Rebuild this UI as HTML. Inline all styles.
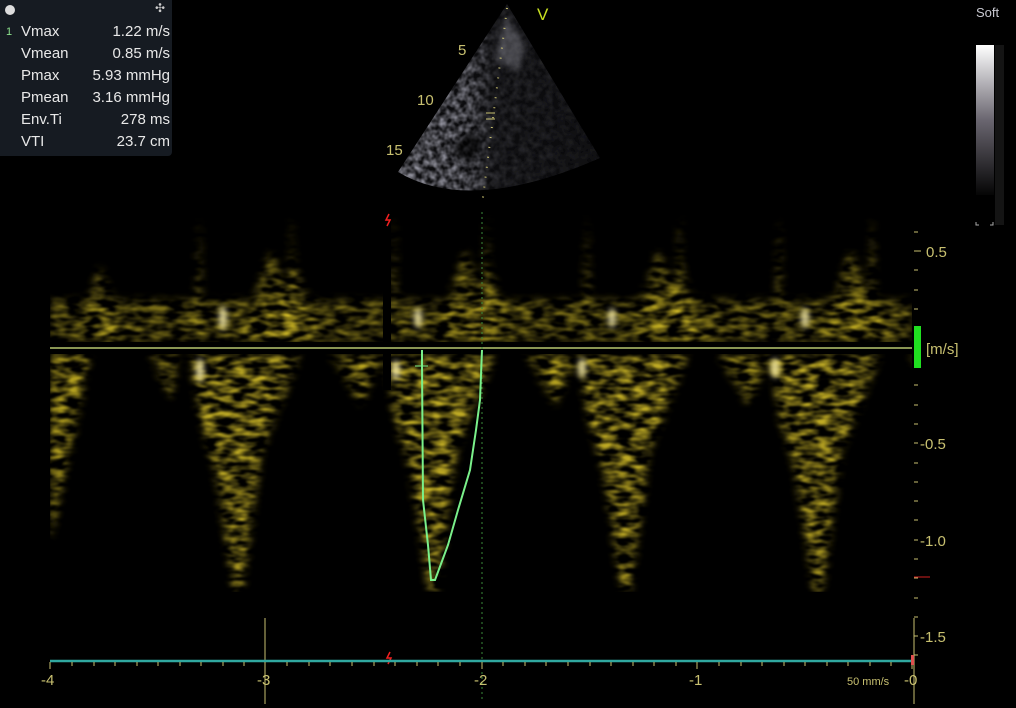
<!DOCTYPE html>
<html><head><meta charset="utf-8"><style>
html,body{margin:0;padding:0;background:#000;width:1016px;height:708px;overflow:hidden;font-family:"Liberation Sans",sans-serif}
#box{position:absolute;left:0;top:0;width:172px;height:156px;background:#161b22;border-radius:0 0 4px 0}
.r{position:absolute;left:0;width:172px;height:22px;font-size:15px;color:#e8e8e8}
.r .l{position:absolute;left:21px}.r .v{position:absolute;right:2px}
</style></head><body>
<svg width="1016" height="708" style="position:absolute;left:0;top:0">
<defs>
<clipPath id="dc"><rect x="50" y="210" width="862" height="450"/></clipPath>
<filter id="tex" x="0" y="0" width="100%" height="100%">
<feGaussianBlur in="SourceGraphic" stdDeviation="4" result="b"/>
<feTurbulence type="fractalNoise" baseFrequency="0.06 0.16" numOctaves="2" seed="3" result="n"/>
<feColorMatrix in="n" type="matrix" values="0 0 0 0 1  0 0 0 0 1  0 0 0 0 1  0 0 0 2.2 -0.75" result="na"/>
<feComposite in="b" in2="na" operator="in" result="c"/>
<feGaussianBlur in="c" stdDeviation="0.9"/>
</filter>
<filter id="sn" x="0" y="0" width="100%" height="100%">
<feTurbulence type="fractalNoise" baseFrequency="0.15" numOctaves="2" seed="5" result="n"/>
<feColorMatrix in="n" type="matrix" values="0 0 0 0 1  0 0 0 0 1  0 0 0 0 1  0 0 0 1.8 -0.5" result="na"/>
<feComposite in="SourceGraphic" in2="na" operator="in"/>
</filter>
<filter id="bl"><feGaussianBlur stdDeviation="3"/></filter>
<linearGradient id="gb" x1="0" y1="0" x2="0" y2="1"><stop offset="0" stop-color="#fff"/><stop offset="0.5" stop-color="#6a6670"/><stop offset="1" stop-color="#050505"/></linearGradient>
<linearGradient id="sec" x1="0" y1="0" x2="1" y2="0"><stop offset="0" stop-color="#a0a0ac"/><stop offset="0.35" stop-color="#80808a"/><stop offset="0.48" stop-color="#2a2a2e"/><stop offset="1" stop-color="#161618"/></linearGradient>
</defs>
<!-- sector -->
<path d="M507,4 L398,172 Q470,215 600,158 Z" fill="#0c0c0e"/>
<path d="M507,4 L398,172 Q470,215 600,158 Z" fill="url(#sec)" filter="url(#sn)"/>
<path d="M505,15 L525,45 L520,70 L495,60 Z" fill="#90909a" opacity="0.4" filter="url(#bl)"/>
<path d="M470,130 L450,150 L470,165 L482,140 Z" fill="#000" opacity="0.7" filter="url(#bl)"/>
<g fill="#c8c070" font-size="15">
<text x="458" y="55">5</text><text x="417" y="105">10</text><text x="386" y="155">15</text>
<text x="537" y="20" fill="#c8e020" font-size="17">V</text>
</g>
<line x1="507" y1="8" x2="482" y2="205" stroke="#c8c070" stroke-dasharray="1,9" stroke-width="2"/>
<line x1="486" y1="113" x2="495" y2="113" stroke="#c8c070"/><line x1="486" y1="119" x2="495" y2="119" stroke="#c8c070"/>
<!-- doppler spectrum -->
<g clip-path="url(#dc)">
<g filter="url(#tex)" fill="#e0c828">
<rect x="50" y="300" width="862" height="42" opacity="0.55"/>
<polygon points="50,355 90,355 75,430 50,540" opacity="0.8"/>
<g id="cy" opacity="0.85">
<polygon points="190,355 300,355 262,450 242,592 234,592 215,470 200,420"/>
<polygon points="330,355 385,355 360,405" opacity="0.7"/>
<polygon points="150,355 180,355 170,400" opacity="0.7"/>
<polygon points="240,340 270,250 310,340" opacity="0.7"/>
<polygon points="194,340 199,215 204,340" opacity="0.6"/>
<polygon points="75,340 100,265 130,340" opacity="0.6"/>
<polygon points="285,340 292,215 298,340" opacity="0.6"/>
</g>
<use href="#cy" x="195"/><use href="#cy" x="388"/><use href="#cy" x="580"/>
</g>
<g filter="url(#bl)" fill="#fff4b0" opacity="0.85">
<ellipse cx="223" cy="318" rx="4" ry="12"/><ellipse cx="200" cy="370" rx="4" ry="12"/>
<ellipse cx="418" cy="318" rx="4" ry="10"/><ellipse cx="396" cy="370" rx="4" ry="10"/>
<ellipse cx="612" cy="318" rx="4" ry="10"/><ellipse cx="582" cy="368" rx="4" ry="10"/>
<ellipse cx="805" cy="318" rx="4" ry="10"/><ellipse cx="775" cy="368" rx="4" ry="10"/>
</g>
</g>
<rect x="383" y="210" width="8" height="180" fill="#000"/>
<rect x="50" y="342" width="862" height="12" fill="#000"/>
<line x1="50" y1="348" x2="912" y2="348" stroke="#b8c870" stroke-width="1.5"/>
<line x1="482" y1="212" x2="482" y2="700" stroke="#3a8a3a" stroke-dasharray="2,3"/>
<!-- trace -->
<polyline points="422,350 422,365 423,500 428,545 431,580 435,580 448,545 458,510 470,470 476,430 480,400 482,350" fill="none" stroke="#7af08a" stroke-width="2"/>
<line x1="415" y1="366" x2="428" y2="366" stroke="#7af08a"/>
<path d="M389,214 l-3,6 h4 l-3,6" stroke="#f02020" fill="none" stroke-width="1.5"/>
<path d="M390,652 l-3,6 h4 l-3,6" stroke="#f02020" fill="none" stroke-width="1.5"/>
<!-- right scale -->
<g stroke="#c8c070">
<line x1="914" y1="232" x2="918" y2="232"/><line x1="914" y1="251" x2="921" y2="251"/>
<line x1="914" y1="270" x2="918" y2="270"/><line x1="914" y1="290" x2="918" y2="290"/><line x1="914" y1="309" x2="918" y2="309"/>
<line x1="914" y1="385" x2="918" y2="385"/><line x1="914" y1="405" x2="918" y2="405"/><line x1="914" y1="424" x2="918" y2="424"/>
<line x1="914" y1="443" x2="918" y2="443"/><line x1="914" y1="463" x2="918" y2="463"/><line x1="914" y1="482" x2="918" y2="482"/><line x1="914" y1="501" x2="918" y2="501"/><line x1="914" y1="520" x2="918" y2="520"/>
<line x1="914" y1="540" x2="918" y2="540"/><line x1="914" y1="559" x2="918" y2="559"/><line x1="914" y1="578" x2="918" y2="578"/><line x1="914" y1="598" x2="918" y2="598"/><line x1="914" y1="617" x2="918" y2="617"/>
<line x1="914" y1="636" x2="918" y2="636"/><line x1="914" y1="655" x2="918" y2="655"/>
<line x1="914" y1="618" x2="914" y2="704"/>
<line x1="265" y1="618" x2="265" y2="704"/>
</g>
<line x1="914" y1="577" x2="930" y2="577" stroke="#d02020"/>
<rect x="914" y="326" width="7" height="42" fill="#20e020"/>
<g fill="#c8c070" font-size="15">
<text x="926" y="257">0.5</text><text x="926" y="354">[m/s]</text>
<text x="920" y="449">-0.5</text><text x="920" y="546">-1.0</text><text x="920" y="642">-1.5</text>
<text x="41" y="685">-4</text><text x="257" y="685">-3</text><text x="474" y="685">-2</text><text x="689" y="685">-1</text><text x="904" y="685">-0</text>
<text x="847" y="685" font-size="11">50 mm/s</text>
</g>
<!-- time axis -->
<line x1="50" y1="661" x2="912" y2="661" stroke="#30a8a0" stroke-width="2.5"/>
<g stroke="#c8c070" stroke-width="1"><path d="M50,662v7M72,662v4M94,662v4M115,662v4M137,662v4M158,662v4M180,662v4M201,662v4M223,662v4M244,662v4M265,662v7M287,662v4M309,662v4M330,662v4M352,662v4M374,662v4M395,662v4M417,662v4M438,662v4M460,662v4M482,662v7M503,662v4M525,662v4M546,662v4M568,662v4M590,662v4M611,662v4M633,662v4M654,662v4M676,662v4M697,662v7M719,662v4M741,662v4M762,662v4M784,662v4M805,662v4M827,662v4M848,662v4M870,662v4M891,662v4M912,662v7"/></g>
<rect x="911" y="655" width="3" height="10" fill="#e05050"/>
<!-- gray bar -->
<rect x="976" y="45" width="18" height="150" fill="url(#gb)"/>
<rect x="995" y="45" width="9" height="180" fill="#141414"/>
<path d="M976,222v3h3M993,222v3h-3" stroke="#aaa" fill="none"/>
<text x="976" y="17" fill="#c8c8d0" font-size="13">Soft</text>
</svg>
<div id="box">
<div style="position:absolute;left:5px;top:5px;width:10px;height:10px;border-radius:50%;background:#ddd"></div>
<div style="position:absolute;right:7px;top:1px;color:#ccc;font-size:12px">✣</div>
<div class="r" style="top:23px"><span style="position:absolute;left:6px;color:#8ce08c;font-size:11px;top:3px">1</span><span class="l">Vmax</span><span class="v">1.22 m/s</span></div>
<div class="r" style="top:45px"><span class="l">Vmean</span><span class="v">0.85 m/s</span></div>
<div class="r" style="top:67px"><span class="l">Pmax</span><span class="v">5.93 mmHg</span></div>
<div class="r" style="top:89px"><span class="l">Pmean</span><span class="v">3.16 mmHg</span></div>
<div class="r" style="top:111px"><span class="l">Env.Ti</span><span class="v">278 ms</span></div>
<div class="r" style="top:133px"><span class="l">VTI</span><span class="v">23.7 cm</span></div>
</div>
</body></html>
